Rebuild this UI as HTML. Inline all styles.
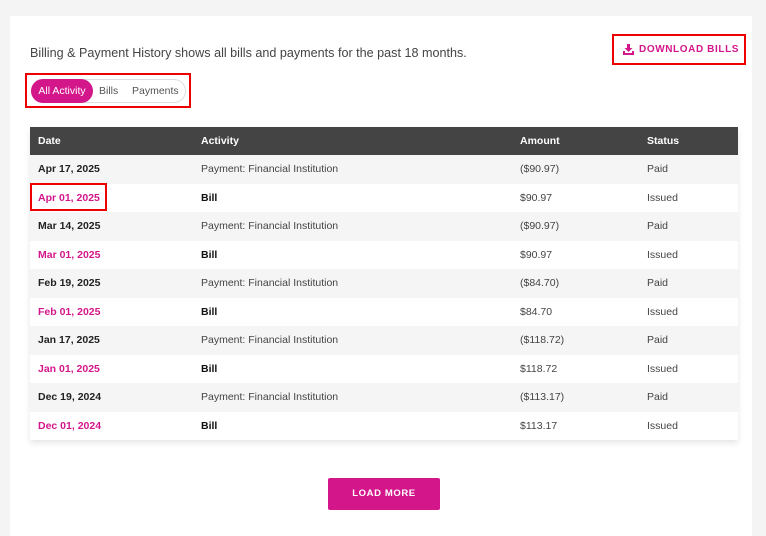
<!DOCTYPE html><html><head><style>
*{margin:0;padding:0;box-sizing:border-box}
body{width:766px;height:525px;background:#f4f4f4;font-family:"Liberation Sans",sans-serif;position:relative;overflow:hidden}
.card{position:absolute;left:10px;top:16px;width:742px;height:520px;background:#fff}
.abs{position:absolute}
.intro{left:30px;top:46px;font-size:12.6px;color:#444}
.dl{left:612px;top:34px;width:134px;height:31px;border:2px solid #e00;color:#d4168b;font-size:10px;font-weight:bold;letter-spacing:.6px;display:flex;align-items:center;padding-left:9px;gap:5px}
.pbox{left:25px;top:73px;width:166px;height:35px;border:2px solid #e00}
.pill{left:31px;top:79px;width:155px;height:24px;border:1px solid #ddd;border-radius:12px}
.pa{left:31px;top:79px;width:62px;height:24px;background:#d4168b;border-radius:12px;color:#fff;font-size:10.5px;line-height:24px;text-align:center}
.pt{top:79px;font-size:10.5px;line-height:24px;color:#555}
table{position:absolute;left:30px;top:127px;width:708px;border-collapse:collapse;box-shadow:0 3px 6px rgba(0,0,0,.1);font-size:10.5px;color:#444}
th{background:#444;color:#fff;text-align:left;height:28px;font-size:10.5px;padding-left:8px}
td{height:28.5px;padding-left:8px;background:#fff}
tr:nth-child(even) td{background:#f5f5f5}
td.d{font-weight:bold;color:#222}
td.m{font-weight:bold;color:#d4168b}
td.b{font-weight:bold;color:#111}
.box{left:30px;top:183px;width:77px;height:28px;border:2px solid #e00}
.lm{left:328px;top:478px;width:112px;height:32px;background:#d4168b;border-radius:2px;color:#fff;font-size:9.5px;font-weight:bold;letter-spacing:.6px;text-align:center;line-height:32px}
</style></head><body>
<div class="card"></div>
<div class="abs intro">Billing &amp; Payment History shows all bills and payments for the past 18 months.</div>
<div class="abs dl"><svg width="11" height="11" viewBox="0 0 11 11"><path d="M4 0h3v4h2.5L5.5 8 1.5 4H4z" fill="#d4168b"/><path d="M0 7v4h11V7H9v2H2V7z" fill="#d4168b"/></svg>DOWNLOAD BILLS</div>
<div class="abs pbox"></div>
<div class="abs pill"></div>
<div class="abs pa">All Activity</div>
<div class="abs pt" style="left:99px">Bills</div>
<div class="abs pt" style="left:132px">Payments</div>
<table>
<tr><th style="width:163px">Date</th><th style="width:319px">Activity</th><th style="width:127px">Amount</th><th>Status</th></tr>
<tr><td class="d">Apr 17, 2025</td><td>Payment: Financial Institution</td><td>($90.97)</td><td>Paid</td></tr>
<tr><td class="m">Apr 01, 2025</td><td class="b">Bill</td><td>$90.97</td><td>Issued</td></tr>
<tr><td class="d">Mar 14, 2025</td><td>Payment: Financial Institution</td><td>($90.97)</td><td>Paid</td></tr>
<tr><td class="m">Mar 01, 2025</td><td class="b">Bill</td><td>$90.97</td><td>Issued</td></tr>
<tr><td class="d">Feb 19, 2025</td><td>Payment: Financial Institution</td><td>($84.70)</td><td>Paid</td></tr>
<tr><td class="m">Feb 01, 2025</td><td class="b">Bill</td><td>$84.70</td><td>Issued</td></tr>
<tr><td class="d">Jan 17, 2025</td><td>Payment: Financial Institution</td><td>($118.72)</td><td>Paid</td></tr>
<tr><td class="m">Jan 01, 2025</td><td class="b">Bill</td><td>$118.72</td><td>Issued</td></tr>
<tr><td class="d">Dec 19, 2024</td><td>Payment: Financial Institution</td><td>($113.17)</td><td>Paid</td></tr>
<tr><td class="m">Dec 01, 2024</td><td class="b">Bill</td><td>$113.17</td><td>Issued</td></tr>
</table>
<div class="abs box"></div>
<div class="abs lm">LOAD MORE</div>
</body></html>
